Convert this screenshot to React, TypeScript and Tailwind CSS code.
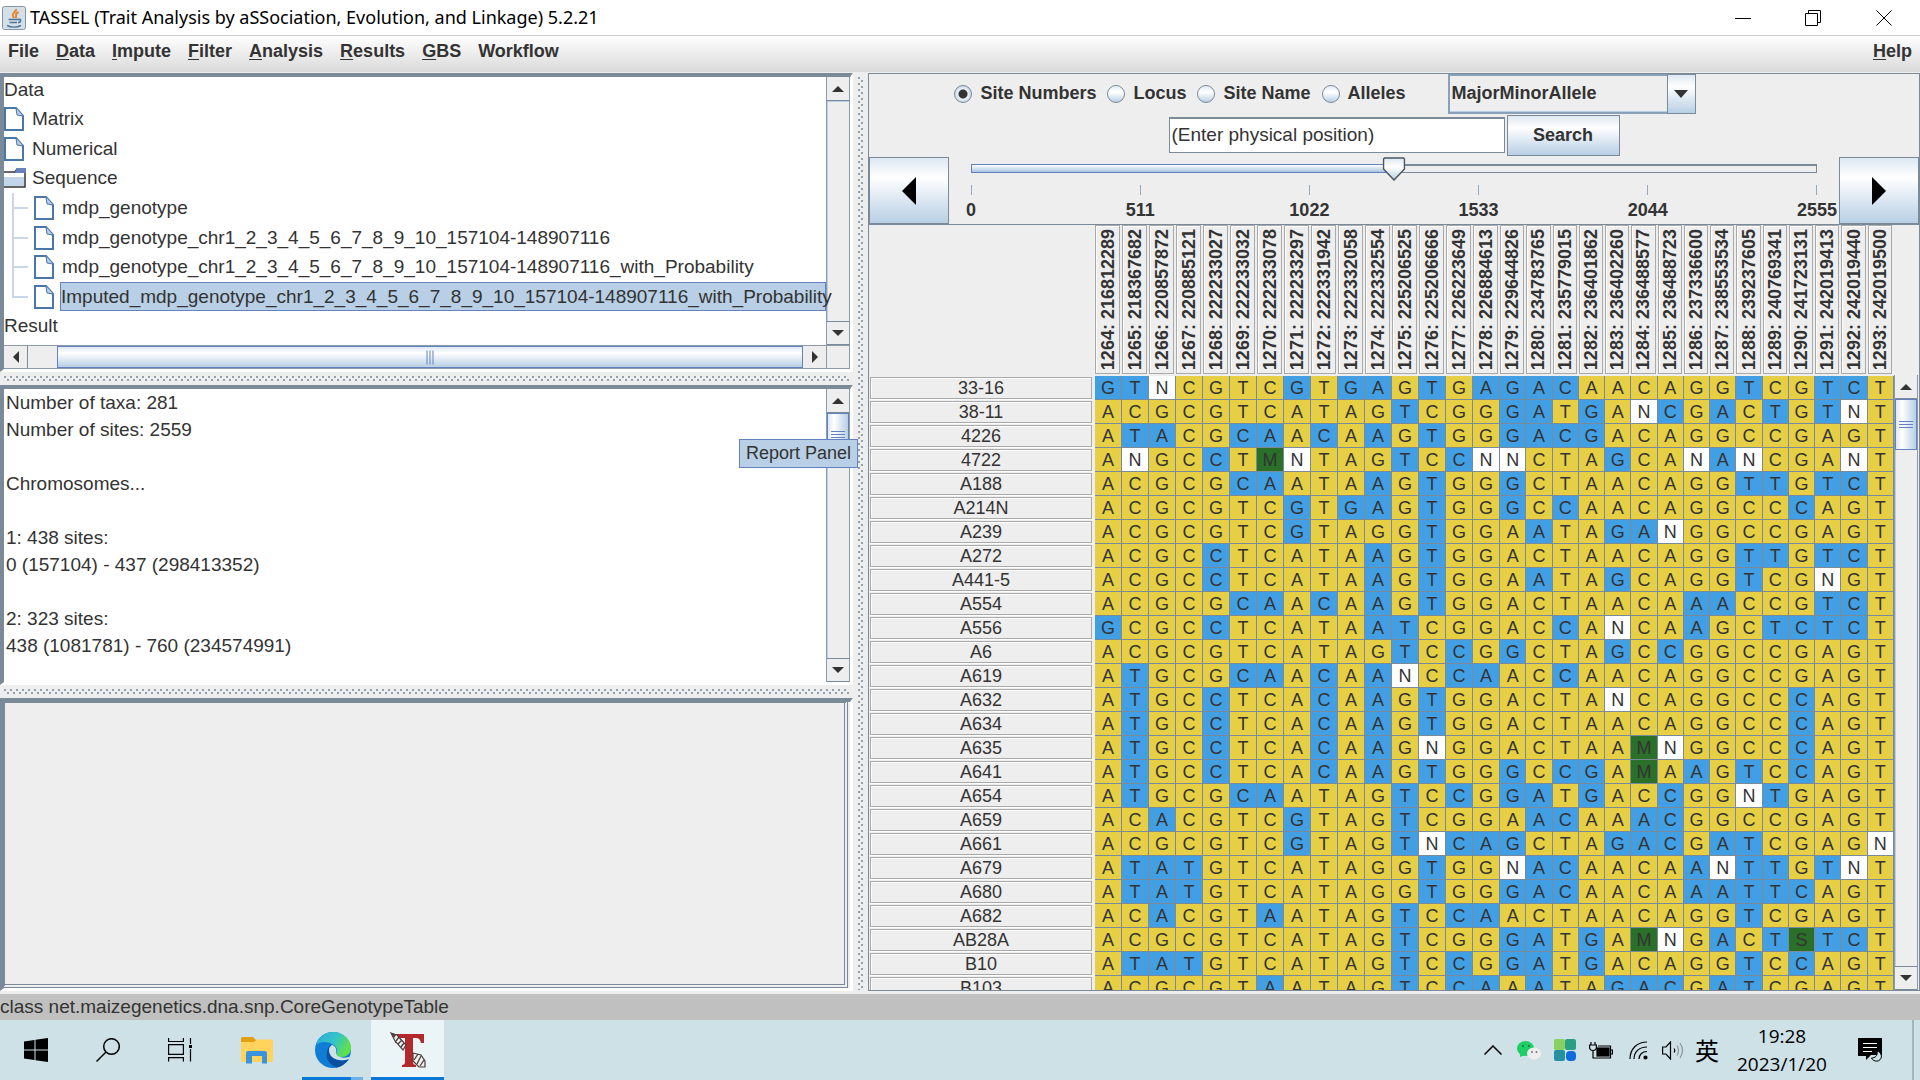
import React from 'react';

const sites = [
  '1264: 216812289', '1265: 218367682', '1266: 220857872', '1267: 220885121', '1268: 222233027',
  '1269: 222233032', '1270: 222233078', '1271: 222233297', '1272: 222331942', '1273: 222332058',
  '1274: 222332554', '1275: 225206525', '1276: 225206666', '1277: 226223649', '1278: 226884613',
  '1279: 229644826', '1280: 234783765', '1281: 235779015', '1282: 236401862', '1283: 236402260',
  '1284: 236488577', '1285: 236488723', '1286: 237336600', '1287: 238553534', '1288: 239237605',
  '1289: 240769341', '1290: 241723131', '1291: 242019413', '1292: 242019440', '1293: 242019500',
];

// major allele at each visible site
const major = 'ACGCGTCATAGGCGGACTAACAGGCCGAGT';

const taxa: [string, string][] = [
  ['33-16', 'GTNCGTCGTGAGTGAGACAACAGGTCGTCT'],
  ['38-11', 'ACGCGTCATAGTCGGGATGANCGACTGTNT'],
  ['4226', 'ATACGCAACAAGTGGGACGACAGGCCGAGT'],
  ['4722', 'ANGCCTMNTAGTCCNNCTAGCANANCGANT'],
  ['A188', 'ACGCGCAATAAGTGGGCTAACAGGTTGTCT'],
  ['A214N', 'ACGCGTCGTGAGTGGGCCAACAGGCCCAGT'],
  ['A239', 'ACGCGTCGTAGGTGGAATAGANGGCCGAGT'],
  ['A272', 'ACGCCTCATAAGTGGACTAACAGGTTGTCT'],
  ['A441-5', 'ACGCCTCATAAGTGGAATAGCAGGTCGNGT'],
  ['A554', 'ACGCGCAACAAGTGGACTAACAAACCGTCT'],
  ['A556', 'GCGCCTCATAATCGGACCANCAAGCTCTCT'],
  ['A6', 'ACGCGTCATAGTCCGGCTAGCCGGCCGAGT'],
  ['A619', 'ATGCGCAACAANCCAACCAACAGGCCGAGT'],
  ['A632', 'ATGCCTCACAAGTGGACTANCAGGCCCAGT'],
  ['A634', 'ATGCCTCACAAGTGGACTAACAGGCCCAGT'],
  ['A635', 'ATGCCTCACAAGNGGACTAAMNGGCCCAGT'],
  ['A641', 'ATGCCTCACAAGTGGGCCGAMAAGTCCAGT'],
  ['A654', 'ATGCGCAATAGTCCGGATGACCGGNTGAGT'],
  ['A659', 'ACACGTCGTAGTCGGAACAAACGGCCGAGT'],
  ['A661', 'ACGCGTCGTAGTNCAGCTAGACGATCGAGN'],
  ['A679', 'ATATGTCATAGGTGGNACAACAANTTGTNT'],
  ['A680', 'ATATGTCATAGGTGGGACAACAAATTCAGT'],
  ['A682', 'ACACGTAATAGTCCAACTAACAGGTCGAGT'],
  ['AB28A', 'ACGCGTCATAGTCGGGATGAMNGACTSTCT'],
  ['B10', 'ATATGTCATAGTCCGGATGACAGGTCCAGT'],
  ['B103', 'ACGCGTAATAGTCCAAATAGACGATCGAGT'],
];

const cellColor = (allele: string, site: number) => {
  if (allele === 'N') return 'bg-white';
  if (allele === 'M' || allele === 'S') return 'bg-[#2a7029]';
  return allele === major[site] ? 'bg-[#e6cf45]' : 'bg-[#439fe3]';
};

const menus = [
  { first: '', rest: 'File' },
  { first: 'D', rest: 'ata' },
  { first: 'I', rest: 'mpute' },
  { first: 'F', rest: 'ilter' },
  { first: 'A', rest: 'nalysis' },
  { first: 'R', rest: 'esults' },
  { first: 'G', rest: 'BS' },
  { first: '', rest: 'Workflow' },
];

const report = [
  'Number of taxa: 281',
  'Number of sites: 2559',
  '',
  'Chromosomes...',
  '',
  '1: 438 sites:',
  '0 (157104) - 437 (298413352)',
  '',
  '2: 323 sites:',
  '438 (1081781) - 760 (234574991)',
];

const arrows = {
  up: 'M0 8 L8 0 L16 8Z',
  down: 'M0 0 L16 0 L8 8Z',
  left: 'M8 0 L8 16 L0 8Z',
  right: 'M0 0 L8 8 L0 16Z',
};

interface ArrowProps {
  dir: 'up' | 'down' | 'left' | 'right';
  className?: string;
}

const Arrow: React.FC<ArrowProps> = ({ dir, className = '' }) => {
  const vertical = dir === 'up' || dir === 'down';
  return (
    <svg
      className={className || (vertical ? 'w-3 h-1.5' : 'w-1.5 h-3')}
      viewBox={vertical ? '0 0 16 8' : '0 0 8 16'}
      preserveAspectRatio="none"
      fill="currentColor"
    >
      <path d={arrows[dir]} />
    </svg>
  );
};

const ScrollButton: React.FC<ArrowProps> = ({ dir, className = '' }) => (
  <button
    aria-label={`Scroll ${dir}`}
    className={`flex items-center justify-center shrink-0 bg-[#eeeeee] text-[#333] border-[#7a8a99] ${className}`}
  >
    <Arrow dir={dir} />
  </button>
);

interface VScrollProps {
  children?: React.ReactNode;
}

const VScroll: React.FC<VScrollProps> = ({ children }) => (
  <div className="flex flex-col w-6 shrink-0 bg-[#eeeeee] border-x border-[#8a9bab]">
    <ScrollButton dir="up" className="h-6 border-b" />
    <div className="flex-1 shadow-[inset_1px_1px_0_#b8cfe5]">{children}</div>
    <ScrollButton dir="down" className="h-6 border-y" />
  </div>
);

const Grip = () => (
  <span className="flex flex-col gap-[2px] w-3.5">
    <span className="h-px bg-[#6382bf]" />
    <span className="h-px bg-[#6382bf]" />
    <span className="h-px bg-[#6382bf]" />
  </span>
);

const Divider = ({ vertical = false }: { vertical?: boolean }) => (
  <div className={`flex items-center justify-center bg-[#eeeeee] ${vertical ? 'py-1' : 'h-[13px] shrink-0 px-1'}`}>
    <div
      className={`bg-[radial-gradient(circle_at_1px_1px,#93a0ad_1px,transparent_1px),radial-gradient(circle_at_4px_4px,#93a0ad_1px,transparent_1px)] bg-[length:6px_6px] ${
        vertical ? 'w-1.5 h-full' : 'w-full h-1.5'
      }`}
    />
  </div>
);

const FileIcon = () => (
  <svg className="w-5 h-6 shrink-0" viewBox="0 0 20 24" fill="#fff" stroke="#4a76a8" strokeWidth="2">
    <path d="M1 1 H12 L19 9 V23 H1Z" />
    <path d="M12 1 L13 8 L19 9" fill="#b8cfe5" strokeWidth="1" />
  </svg>
);

const FolderIcon = () => (
  <svg className="w-[22px] h-5 shrink-0" viewBox="0 0 22 20">
    <path d="M0 4 H11 L13 1 H21 V19 H0" fill="#fff" stroke="#333" strokeWidth="1.5" />
    <path d="M11 4 L13 0 H22 V5 H11Z" fill="#6382bf" />
    <path d="M0 9 H20 V18 H0Z" fill="#c3d6e9" />
  </svg>
);

const TreeChild = ({ label, selected = false, last = false }: { label: string; selected?: boolean; last?: boolean }) => (
  <li className="flex items-center min-w-0">
    <span className="flex flex-col w-4 ml-2 mr-1.5 self-stretch shrink-0">
      <span className="flex-1 border-l-2 border-b-2 border-[#c8d8e8]" />
      <span className={last ? 'flex-1' : 'flex-1 border-l-2 border-[#c8d8e8]'} />
    </span>
    <FileIcon />
    <span
      className={
        selected
          ? 'relative z-10 ml-1.5 flex-1 min-w-0 self-stretch flex items-center border border-[#6382bf] bg-[#b8cfe5] whitespace-nowrap'
          : 'ml-2 whitespace-nowrap'
      }
    >
      {label}
    </span>
  </li>
);

const steel = 'bg-linear-to-b from-[#dde8f3] via-white via-30% to-[#b8cfe5] border border-[#7a8a99]';

const RadioOption = ({ label, checked = false }: { label: string; checked?: boolean }) => (
  <label className="flex items-center gap-2">
    <input
      type="radio"
      name="header"
      defaultChecked={checked}
      className="appearance-none size-[18px] rounded-full border border-[#7a8a99] bg-linear-to-b from-[#e4edf6] via-white via-40% to-[#b8cfe5] checked:bg-[radial-gradient(circle,#333_4px,#eef3f8_5px,#c8d8e8_8px)]"
    />
    {label}
  </label>
);

const TitleBar = () => (
  <header className="flex items-center h-[35px] shrink-0 bg-white text-black font-['Noto_Sans',sans-serif] text-[18px]">
    <svg className="w-6 h-6 ml-0.5 mr-1" viewBox="0 0 24 24">
      <rect x="0.5" y="0.5" width="23" height="23" rx="2" fill="#d5dfe8" stroke="#8595a5" />
      <path d="M14 3 C15 6 8 7 12 12 M16.5 6 C12 8 15.5 9 13.5 12" fill="none" stroke="#e8842c" strokeWidth="2" />
      <path d="M6.500 13.500 H16 M7.500 16.500 H15 M5 19.500 C9 21.500 15 21.500 19 19.500 M16 13.500 C20 12.500 19 16.500 16 16.500" fill="none" stroke="#4f7699" strokeWidth="1.600" />
    </svg>
    <h1 className="flex-1">TASSEL (Trait Analysis by aSSociation, Evolution, and Linkage) 5.2.21</h1>
    <div className="flex">
      <button aria-label="Minimize" className="flex w-[70px] justify-center">
        <svg className="size-4" viewBox="0 0 16 16" fill="none" stroke="#000">
          <path d="M0 8.5 H16" />
        </svg>
      </button>
      <button aria-label="Restore" className="flex w-[70px] justify-center">
        <svg className="size-4" viewBox="0 0 16 16" fill="none" stroke="#000">
          <path d="M0.5 3.5 H12.5 V15.5 H0.5Z M3.5 3.5 V0.5 H15.5 V12.5 H12.5" />
        </svg>
      </button>
      <button aria-label="Close" className="flex w-[72px] justify-center">
        <svg className="size-4" viewBox="0 0 16 16" fill="none" stroke="#000">
          <path d="M0.5 0.5 L15.5 15.5 M15.5 0.5 L0.5 15.5" />
        </svg>
      </button>
    </div>
  </header>
);

const MenuBar = () => (
  <nav className="flex items-center h-[37px] shrink-0 px-2 pb-[5px] gap-[17px] border-t border-[#ccc] bg-linear-to-b from-white to-[#dadada] font-bold text-[18px]">
    {menus.map((m) => (
      <button key={m.first + m.rest}>
        <span className="underline underline-offset-2">{m.first}</span>
        {m.rest}
      </button>
    ))}
    <button className="ml-auto">
      <span className="underline underline-offset-2">H</span>elp
    </button>
  </nav>
);

const pane = 'border-l-4 border-t-4 border-r-[3px] border-b-[3px] border-l-[#7a8a99] border-t-[#7a8a99] border-r-white border-b-white';

const TreePane = () => (
  <section className={`flex flex-col h-[299px] shrink-0 bg-white ${pane}`}>
    <div className="flex flex-1">
      <ul className="flex-1 min-w-0 grid grid-rows-9 -mt-0.5 h-[266px] text-[19px] leading-6">
        <li className="flex items-center">Data</li>
        <li className="flex items-center gap-2"><FileIcon />Matrix</li>
        <li className="flex items-center gap-2"><FileIcon />Numerical</li>
        <li className="flex items-center gap-1.5"><FolderIcon />Sequence</li>
        <TreeChild label="mdp_genotype" />
        <TreeChild label="mdp_genotype_chr1_2_3_4_5_6_7_8_9_10_157104-148907116" />
        <TreeChild label="mdp_genotype_chr1_2_3_4_5_6_7_8_9_10_157104-148907116_with_Probability" />
        <TreeChild label="Imputed_mdp_genotype_chr1_2_3_4_5_6_7_8_9_10_157104-148907116_with_Probability" selected last />
        <li className="flex items-center">Result</li>
      </ul>
      <VScroll />
    </div>
    <div className="flex h-6 shrink-0 bg-[#eeeeee] border-y border-[#8a9bab]">
      <ScrollButton dir="left" className="w-6 border-r" />
      <div className="flex flex-1 pl-[29px]">
        <div className="flex flex-1 items-center justify-center border border-[#6382bf] bg-linear-to-b from-[#dde8f3] via-white via-30% to-[#b8cfe5]">
          <span className="rotate-90"><Grip /></span>
        </div>
      </div>
      <ScrollButton dir="right" className="w-[23px]" />
      <div className="w-6 border-x border-[#8a9bab]" />
    </div>
  </section>
);

const ReportPane = () => (
  <section className={`relative flex h-[300px] shrink-0 bg-white ${pane}`}>
    <div className="flex-1 pl-0.5 text-[19px] leading-[27px]">
      {report.map((line, i) => (
        <p key={i} className="h-[27px]">{line}</p>
      ))}
    </div>
    <VScroll>
      <div className="flex items-end justify-center h-9 pb-2.5 border border-[#6382bf] bg-linear-to-r from-[#dde8f3] via-white via-30% to-[#b8cfe5]">
        <Grip />
      </div>
    </VScroll>
    <div role="tooltip" className="absolute z-10 top-[50px] -right-2 px-1.5 h-[29px] leading-[26px] border border-[#6382bf] bg-[#b8cfe5] text-[18px] whitespace-nowrap">
      Report Panel
    </div>
  </section>
);

const ticks = ['0', '511', '1022', '1533', '2044', '2555'];

const SiteSlider = () => (
  <div className="flex h-[68px] border-b border-[#7a8a99]">
    <button aria-label="Previous sites" className={`flex items-center justify-center w-20 text-black ${steel}`}>
      <Arrow dir="left" className="w-3.5 h-7" />
    </button>
    <div className="relative flex-1 min-w-0 mx-[22px] pt-[7px]">
      <div className="flex h-[9px]">
        <div className="w-1/2 border border-[#6382bf] bg-linear-to-b from-white to-[#a9c4e0]" />
        <div className="w-1/2 border border-t-2 border-l-0 border-[#7a8a99]" />
      </div>
      <svg className="absolute top-0 left-1/2 -translate-x-1/2 w-[23px] h-6" viewBox="0 0 23 24">
        <defs>
          <linearGradient id="thumb" x2="0" y2="1">
            <stop offset="0" stopColor="#dde8f3" />
            <stop offset="0.4" stopColor="#fff" />
            <stop offset="1" stopColor="#b8cfe5" />
          </linearGradient>
        </defs>
        <path d="M2 1 H21 L22 2 V12 L11.5 23 L1 12 V2Z" fill="url(#thumb)" stroke="#4c5661" strokeWidth="1.5" />
      </svg>
      <div className="flex justify-between mt-3">
        {ticks.map((t) => (
          <div key={t} className="flex flex-col items-center w-0 font-bold text-[18px] leading-[22px]">
            <span className="w-px h-2.5 shrink-0 bg-[#93a9c0]" />
            <span className="mt-1">{t}</span>
          </div>
        ))}
      </div>
      <input type="range" aria-label="Site" min={0} max={2558} defaultValue={1279} className="absolute inset-x-0 top-0 h-6 opacity-0" />
    </div>
    <button aria-label="Next sites" className={`flex items-center justify-center w-20 text-black ${steel}`}>
      <Arrow dir="right" className="w-3.5 h-7" />
    </button>
  </div>
);

const GenotypeTable = () => (
  <div className="flex flex-1 min-h-0 pr-px">
    <div className="flex-1 min-w-0 overflow-hidden pl-px">
      <table className="w-full table-fixed border-separate border-spacing-0 text-[18px] leading-[22px]">
        <colgroup>
          <col className="w-[225px]" />
          {sites.map((s, i) => (
            <col key={s} className={i < 15 ? 'w-[27px]' : ''} />
          ))}
        </colgroup>
        <thead>
          <tr className="h-[151px]">
            <td />
            {sites.map((s) => (
              <th key={s} className="p-0 pr-0.5 pb-0.5 align-top">
                <div className="flex items-center justify-center h-[149px] border border-[#a9a9a9] shadow-[inset_1px_1px_0_#fff]">
                  <span className="[writing-mode:vertical-rl] rotate-180 whitespace-nowrap">{s}</span>
                </div>
              </th>
            ))}
          </tr>
        </thead>
        <tbody>
          {taxa.map(([name, alleles]) => (
            <tr key={name} className="h-6">
              <th className="p-0 pr-[3px] font-normal">
                <div className="h-[22px] leading-5 border border-[#a9a9a9] shadow-[inset_1px_1px_0_#fff,0_1px_0_#fff]">
                  {name}
                </div>
              </th>
              {alleles.split('').map((a, i) => (
                <td key={i} className={`p-0 text-center border-r border-b border-[#7a8a99] ${cellColor(a, i)}`}>
                  {a}
                </td>
              ))}
            </tr>
          ))}
        </tbody>
      </table>
    </div>
    <div className="flex pt-[150px]">
      <VScroll>
        <div className="flex items-center justify-center h-[51px] border border-[#6382bf] bg-linear-to-r from-[#dde8f3] via-white via-30% to-[#b8cfe5]">
          <Grip />
        </div>
      </VScroll>
    </div>
  </div>
);

const GenotypePane = () => (
  <main className="flex flex-col min-w-0 min-h-0 mb-[3px] border border-[#7a8a99]">
    <div className="flex justify-center gap-2.5 h-[41px] pr-[138px] font-bold text-[18px]">
      <div className="flex items-center gap-[11px] pb-0.5">
        <RadioOption label="Site Numbers" checked />
        <RadioOption label="Locus" />
        <RadioOption label="Site Name" />
        <RadioOption label="Alleles" />
      </div>
      <div className="relative ml-8 w-[248px] h-10">
        <select aria-label="Color by" className="appearance-none w-full h-full pl-0.5 pb-0.5 bg-[#eeeeee] border-2 border-[#8a9fb8] shadow-[inset_-1px_-1px_0_#b8cfe5]">
          <option>MajorMinorAllele</option>
        </select>
        <span className={`absolute right-0 inset-y-0 w-[29px] flex items-center justify-center pointer-events-none ${steel}`}>
          <Arrow dir="down" className="w-3.5 h-2" />
        </span>
      </div>
    </div>
    <form className="flex justify-center gap-0.5 h-[42px]">
      <input
        type="text"
        aria-label="Physical position"
        defaultValue="(Enter physical position)"
        className="w-[336px] h-9 mt-0.5 pl-0.5 pb-0.5 bg-white border border-t-2 border-[#7a8a99] text-[19px]"
      />
      <button type="button" className={`w-[113px] h-[41px] font-bold text-[18px] ${steel}`}>Search</button>
    </form>
    <SiteSlider />
    <GenotypeTable />
  </main>
);

const TaskBar = () => (
  <footer className="flex h-[60px] shrink-0 bg-[#cde1e7] text-black">
    <button aria-label="Start" className="w-[72px] flex items-center justify-center">
      <svg className="w-6 h-6" viewBox="0 0 24 24">
        <path d="M0 3.5 L10.5 2 V11.5 H0Z M11.5 1.8 L24 0 V11.5 H11.5Z M0 12.5 H10.5 V22 L0 20.5Z M11.5 12.5 H24 V24 L11.5 22.2Z" />
      </svg>
    </button>
    <button aria-label="Search" className="w-[72px] flex items-center justify-center">
      <svg className="w-6 h-6" viewBox="0 0 24 24" fill="none" stroke="#000" strokeWidth="1.5">
        <circle cx="15.5" cy="8.5" r="7.8" />
        <path d="M10 14 L0.5 23.5" />
      </svg>
    </button>
    <button aria-label="Task view" className="w-[72px] flex items-center justify-center">
      <svg className="w-6 h-6" viewBox="0 0 24 24" fill="none" stroke="#000" strokeWidth="1.2">
        <path d="M0.6 0 V3.5 H15.4 V0 M0.6 6.6 H15.4 V16.4 H0.6Z M0.6 23.5 V19.6 H15.4 V23.5 M22.5 0 V6 M22.5 11 V23.5" />
        <rect x="21" y="7" width="3" height="3" fill="#000" stroke="none" />
      </svg>
    </button>
    <button aria-label="File Explorer" className="w-[82px] flex items-center justify-center">
      <svg className="w-8 h-[27px]" viewBox="0 0 32 27">
        <path d="M0 1.5 Q0 0 1.5 0 H12 L15 3 H30 Q32 3 32 5 V10 H0Z" fill="#e0a010" />
        <path d="M0 5 H13 L16 2.5 H30.5 Q32 2.5 32 4 V23.5 Q32 25 30.5 25 H1.5 Q0 25 0 23.5Z" fill="#ffd35c" />
        <path d="M5 26.5 V16 Q5 14 7 14 H24 Q26 14 26 16 V26.5 H21 V19 H11 V26.5Z" fill="#3a93dc" />
      </svg>
    </button>
    <button aria-label="Microsoft Edge" className="w-[73px] pr-1 flex flex-col items-center justify-end gap-[9px]">
      <svg className="size-9" viewBox="0 0 36 36">
        <defs>
          <linearGradient id="edgeTop" x2="1" y2="0.4">
            <stop offset="0" stopColor="#2aa8df" />
            <stop offset="0.6" stopColor="#35c6c4" />
            <stop offset="1" stopColor="#5fe04a" />
          </linearGradient>
        </defs>
        <circle cx="18" cy="18" r="18" fill="#0f7cd6" />
        <path d="M1 13 C3 5 10 0 18 0 C28 0 36 7 36 16 C36 22 31 25 27 25 C23 25 20 24 21 22 C24 18 21 13 15 11 C9 9 4 10 1 13Z" fill="url(#edgeTop)" />
        <path d="M12 20 C10 29 17 34 22 35.5 C28 34 32 30 34 27 C28 30 17 29 14 20 C14 16 15 14 17 13 C14 13 12.5 17 12 20Z" fill="#0c4f9e" />
        <path d="M21 22 C22 18 21 14 17 13 C13 15 13 21 17 25 C22 29 28 29 34 27 L36 24 C33 26 24 27 21 22Z" fill="#cde1e7" />
      </svg>
      <span className="flex w-[61px] h-[3px] bg-[#0a78d6]"><span className="ml-auto w-3 bg-[#6fb1e8]" /></span>
    </button>
    <button aria-label="TASSEL" className="w-[73px] flex flex-col items-center justify-end gap-[9px] bg-[#ebf4f6]">
      <svg className="w-9 h-9" viewBox="0 0 36 36">
        <path d="M5 2 H34 V11 H31 Q30 6 26 6 H23 V30 Q23 33 26 33 V35 H12 V33 Q15 33 15 30 V6 H12 Q8 6 8 11 H5Z" fill="#b3282a" />
        <path d="M1 1 L7 3 L16 13 L13 18 L5 9Z M23 21 L31 23 L35 29 V35 H29 L23 29Z" fill="#f1eeee" stroke="#4b3d3d" strokeWidth="1.2" />
        <path d="M1 1 L6 3 L4 6Z" fill="#4b3d3d" />
        <path d="M6 9 L9 5 M8 12 L12 8 M11 15 L14 11 M24 28 L28 22 M27 32 L31 24 M30 34 L34 28" stroke="#4b3d3d" strokeWidth="1.3" />
      </svg>
      <span className="w-full h-[3px] bg-[#0a78d6]" />
    </button>
    <div className="ml-auto flex items-center">
      <svg className="w-[18px] h-2.5 mr-[15px]" viewBox="0 0 18 10" fill="none" stroke="#000" strokeWidth="1.5">
        <path d="M0.5 9.5 L9 1 L17.5 9.5" />
      </svg>
      <svg className="w-6 h-[19px] mr-[13px]" viewBox="0 0 24 19">
        <ellipse cx="8.5" cy="7.5" rx="8.5" ry="7.5" fill="#1fcf66" />
        <path d="M3 12 L3 16 L8 14Z" fill="#1fcf66" />
        <circle cx="6" cy="5" r="1" fill="#0b7a39" />
        <circle cx="12" cy="5" r="1" fill="#0b7a39" />
        <ellipse cx="17" cy="12.5" rx="7" ry="6" fill="#eeeeee" />
        <circle cx="15" cy="11" r="1" fill="#777" />
        <circle cx="19.5" cy="11" r="1" fill="#777" />
      </svg>
      <svg className="size-[22px] mr-[13px]" viewBox="0 0 22 22">
        <rect width="11" height="11" rx="2" fill="#86d162" />
        <rect x="11" width="11" height="11" rx="2" fill="#2b9f83" />
        <rect y="11" width="11" height="11" rx="2" fill="#2490a0" />
        <rect x="12" y="12" width="10" height="10" rx="4" fill="#0f6ae0" />
      </svg>
      <svg className="w-6 h-[17px] mr-4" viewBox="0 0 24 17" fill="none" stroke="#000" strokeWidth="1.2">
        <path d="M2 0 V3 M6 0 V3 M0.6 3 H7.4 V6 Q7 8.5 4 8.5 Q1 8.5 0.6 6Z M4 9 V13 M9 4 H21.5 V16 H4 V12 M22 8 H23.5 V12 H22" />
        <rect x="8" y="6" width="12" height="8" fill="#000" />
      </svg>
      <svg className="w-[19px] h-[19px] mr-[14px]" viewBox="0 0 19 19" fill="none" stroke="#000" strokeWidth="1.2">
        <path d="M1 18 C1 8 8 1 18 1 M5 18 C5 11 10 6 18 6 M10 18 C10 14 13 10.5 18 10.5" />
        <circle cx="16.5" cy="16.5" r="1.5" fill="#000" />
      </svg>
      <svg className="w-[22px] h-[19px] mr-[11px]" viewBox="0 0 22 19" fill="none" stroke="#000" strokeWidth="1.2">
        <path d="M0.6 6 H4 L8.5 1 V18 L4 13 H0.6Z M12 7.5 Q13.5 9.5 12 11.5" />
        <path d="M15 4.5 Q18 9.5 15 14.5 M18 2 Q23 9.5 18 17" stroke="#8a9599" />
      </svg>
      <span className="font-['Noto_Sans_CJK_SC',sans-serif] text-[24px] leading-7">英</span>
      <time className="ml-4 w-[94px] text-center font-['Open_Sans',sans-serif] text-[19px] leading-7">
        19:28<br />2023/1/20
      </time>
      <svg className="w-6 h-6 ml-[29px] mr-[30px]" viewBox="0 0 24 24">
        <path d="M0 0 H24 V17 H13 L8 22 V18 H0Z" fill="#000" />
        <path d="M5 5.5 H19 M5 9.5 H19 M5 13.5 H14" stroke="#fff" strokeWidth="1.2" />
        <path d="M19 13 C20 18 17 20 13.5 20 C15 24 23 25 23.5 18 C23 15 21 13.5 19 13Z" fill="#cde1e7" stroke="#000" />
      </svg>
      <span className="self-stretch w-2 border-l-2 border-[#a3b4ba]" />
    </div>
  </footer>
);

const App = () => (
  <div className="flex flex-col h-screen overflow-hidden bg-[#eeeeee] text-[#333] font-['Liberation_Sans',Arial,sans-serif]">
    <TitleBar />
    <MenuBar />
    <div className="grid grid-cols-[853fr_15px_1052fr] flex-1 min-h-0 pt-px bg-[#eeeeee]">
      <div className="flex flex-col min-w-0">
        <TreePane />
        <Divider />
        <ReportPane />
        <Divider />
        <section aria-label="Chart" className={`flex-1 mb-[3px] pr-0.5 ${pane}`}>
          <div className="h-full border border-r-4 border-b-4 border-double border-[#7a8a99]" />
        </section>
      </div>
      <Divider vertical />
      <GenotypePane />
    </div>
    <div className="h-[26px] shrink-0 bg-[#c0c0c0] text-[19px] leading-[26px]">
      class net.maizegenetics.dna.snp.CoreGenotypeTable
    </div>
    <TaskBar />
  </div>
);

export default App;
